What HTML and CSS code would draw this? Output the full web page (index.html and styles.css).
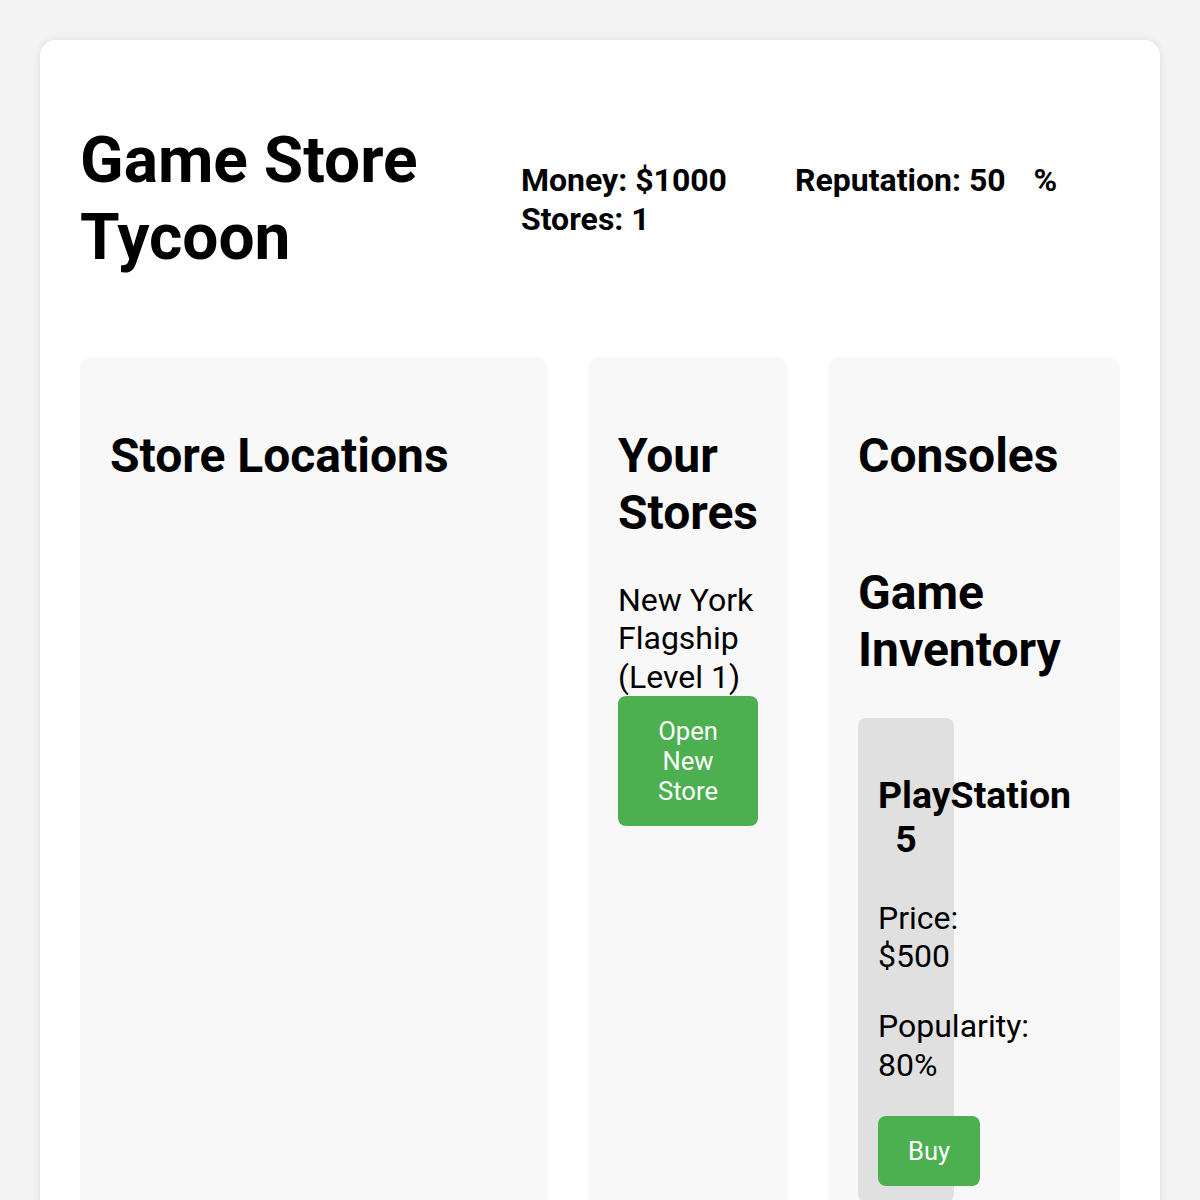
FILE: index.html
```html
<!DOCTYPE html>
<html lang="en">
<head>
<meta charset="utf-8">
<title>Game Store Tycoon</title>
<link rel="stylesheet" href="styles.css">
</head>
<body>
<div class="container">
  <header class="header">
    <h1 class="title">Game Store Tycoon</h1>
    <div class="stats">
      <div class="stat">Money: $1000</div>
      <div class="stat">Reputation: 50<span class="pct">%</span></div>
      <div class="stat">Stores: 1</div>
    </div>
  </header>
  <main class="panels">
    <section class="panel">
      <h2 class="panel-title">Store Locations</h2>
      <div class="locations"></div>
    </section>
    <section class="panel">
      <h2 class="panel-title">Your Stores</h2>
      <div class="store-list">
        <div class="store-item">New York Flagship (Level 1)</div>
      </div>
      <button class="btn">Open New Store</button>
    </section>
    <section class="panel">
      <h2 class="panel-title">Consoles</h2>
      <div class="console-list"></div>
      <h2 class="panel-title">Game Inventory</h2>
      <div class="inventory">
        <div class="card">
          <h3 class="card-title">PlayStation 5</h3>
          <p class="card-text">Price: $500</p>
          <p class="card-text">Popularity: 80%</p>
          <button class="btn">Buy</button>
        </div>
      </div>
    </section>
  </main>
</div>
</body>
</html>
```
FILE: styles.css
```css
html, body {
  margin: 0;
}
body {
  padding: 40px;
  background: #f4f4f4;
  font-family: Roboto, "Liberation Sans", sans-serif;
  font-size: 32px;
  line-height: 1.2;
  color: #000;
}
.container {
  background: #fff;
  border-radius: 16px;
  padding: 40px;
  box-shadow: 0 0 10px rgba(0, 0, 0, 0.1);
}
.header {
  display: flex;
  align-items: center;
  gap: 40px;
  margin-bottom: 38px;
}
.title {
  flex: 1;
  font-size: 64px;
  font-weight: 700;
  margin: 0.67em 0;
}
.stats {
  flex: 0 0 599px;
  display: flex;
  flex-wrap: wrap;
  column-gap: 68px;
  font-weight: 700;
}
.pct {
  margin-left: 28px;
}
.panels {
  display: grid;
  grid-template-columns: 1fr 200px 292px;
  gap: 40px;
}
.panel {
  background: #f8f8f8;
  border-radius: 12px;
  padding: 30px;
  min-width: 0;
}
.panel-title {
  font-size: 48px;
  font-weight: 700;
  line-height: normal;
  margin: 0.83em 0;
}
.console-list {
  display: flow-root;
}
.btn {
  background: #4caf50;
  color: #fff;
  border: none;
  border-radius: 8px;
  padding: 20px 30px;
  font-family: Roboto, "Liberation Sans", sans-serif;
  font-size: 25.6px;
  line-height: 30px;
  cursor: pointer;
}
.card {
  width: 56px;
  background: #e0e0e0;
  border-radius: 8px;
  padding: 18px 20px 16px;
  text-align: center;
}
.card-title {
  font-size: 37.44px;
  font-weight: 700;
  line-height: normal;
  margin: 1em 0;
}
.card-text {
  margin: 1em 0;
}
```
